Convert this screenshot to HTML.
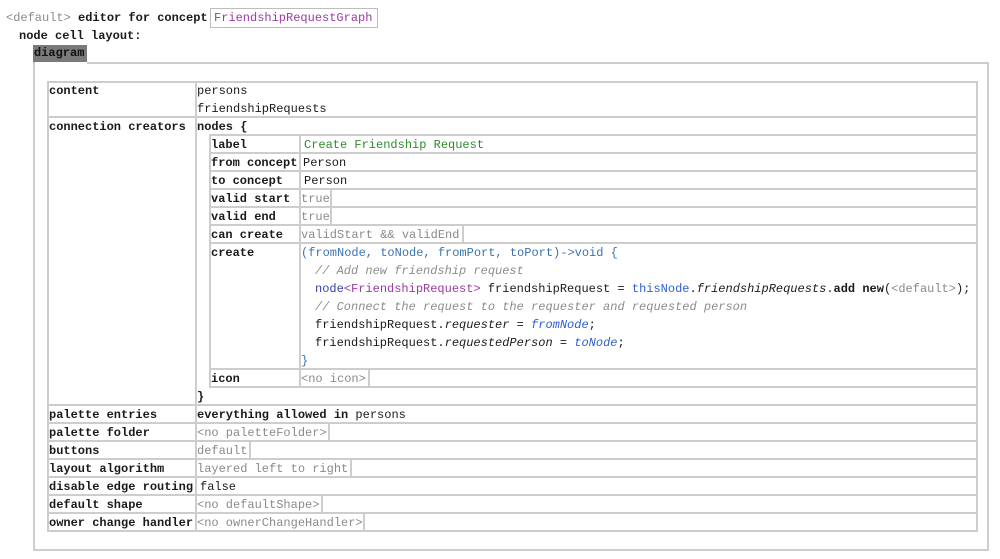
<!DOCTYPE html>
<html><head><meta charset="utf-8">
<style>
*{margin:0;padding:0;box-sizing:border-box}
body{width:1000px;height:559px;background:#fff;position:relative;overflow:hidden;font-family:"Liberation Mono",monospace;font-size:12px;color:#1a1a1a}
.t{position:absolute;line-height:18px;white-space:pre}
.b{font-weight:bold}
.g{color:#8a8a8a}
.h{position:absolute;height:2px;background:#cdcdcd}
.v{position:absolute;width:2px;background:#cdcdcd}
.bx{position:absolute;border:2px solid #cdcdcd;border-left:none;border-top:none}
.c{color:#8c8c8c;font-style:italic}
.bl{color:#3a74b0}
.pu{color:#9b3aa3}
.nd{color:#3b3fb0}
.tn{color:#2d5fd0}
.i{font-style:italic}
</style></head><body>
<div class="t" style="left:6px;top:9px"><span class="g">&lt;default&gt;</span> <span class="b">editor for concept</span></div>
<div style="position:absolute;left:210px;top:8px;width:168px;height:20px;border:1px solid #bdbdbd"></div>
<div class="t pu" style="left:214px;top:9px">FriendshipRequestGraph</div>
<div class="t b" style="left:19px;top:27px">node cell layout:</div>
<div style="position:absolute;left:33px;top:45px;width:54px;height:17px;background:#7a7a7a"></div>
<div class="t b" style="left:34px;top:44px;color:#111">diagram</div>
<div style="position:absolute;left:33px;top:62px;width:956px;height:489px;border:2px solid #cdcdcd;border-top:none"></div>
<div class="h" style="left:87px;top:62px;width:902px"></div>

<div class="v" style="left:47px;top:81px;height:451px"></div>
<div class="v" style="left:195px;top:81px;height:451px"></div>
<div class="v" style="left:976px;top:81px;height:451px"></div>
<div class="h" style="left:47px;top:81px;width:931px"></div>
<div class="h" style="left:47px;top:116px;width:931px"></div>
<div class="h" style="left:47px;top:404px;width:931px"></div>
<div class="h" style="left:47px;top:422px;width:931px"></div>
<div class="h" style="left:47px;top:440px;width:931px"></div>
<div class="h" style="left:47px;top:458px;width:931px"></div>
<div class="h" style="left:47px;top:476px;width:931px"></div>
<div class="h" style="left:47px;top:494px;width:931px"></div>
<div class="h" style="left:47px;top:512px;width:931px"></div>
<div class="h" style="left:47px;top:530px;width:931px"></div>

<div class="t b" style="left:49px;top:82px">content</div>
<div class="t" style="left:197px;top:82px">persons</div>
<div class="t" style="left:197px;top:100px">friendshipRequests</div>
<div class="t b" style="left:49px;top:118px">connection creators</div>
<div class="t b" style="left:197px;top:118px">nodes {</div>
<div class="t b" style="left:197px;top:388px">}</div>

<div class="v" style="left:209px;top:135px;height:253px"></div>
<div class="v" style="left:299px;top:135px;height:253px"></div>
<div class="h" style="left:209px;top:134px;width:768px"></div>
<div class="h" style="left:209px;top:152px;width:768px"></div>
<div class="h" style="left:209px;top:170px;width:768px"></div>
<div class="h" style="left:209px;top:188px;width:768px"></div>
<div class="h" style="left:209px;top:206px;width:768px"></div>
<div class="h" style="left:209px;top:224px;width:768px"></div>
<div class="h" style="left:209px;top:242px;width:768px"></div>
<div class="h" style="left:209px;top:368px;width:768px"></div>
<div class="h" style="left:209px;top:386px;width:768px"></div>

<div class="t b" style="left:211px;top:136px">label</div>
<div class="t" style="left:304px;top:136px;color:#2e8b2e">Create Friendship Request</div>
<div class="t b" style="left:211px;top:154px">from concept</div>
<div class="t" style="left:303px;top:154px">Person</div>
<div class="t b" style="left:211px;top:172px">to concept</div>
<div class="t" style="left:304px;top:172px">Person</div>
<div class="t b" style="left:211px;top:190px">valid start</div>
<div class="bx" style="left:299px;top:188px;width:33px;height:20px"></div>
<div class="t g" style="left:301px;top:190px">true</div>
<div class="t b" style="left:211px;top:208px">valid end</div>
<div class="bx" style="left:299px;top:206px;width:33px;height:20px"></div>
<div class="t g" style="left:301px;top:208px">true</div>
<div class="t b" style="left:211px;top:226px">can create</div>
<div class="bx" style="left:299px;top:224px;width:165px;height:20px"></div>
<div class="t g" style="left:301px;top:226px">validStart &amp;&amp; validEnd</div>
<div class="t b" style="left:211px;top:244px">create</div>
<div class="t bl" style="left:301px;top:244px">(fromNode, toNode, fromPort, toPort)-&gt;void {</div>
<div class="t c" style="left:315px;top:262px">// Add new friendship request</div>
<div class="t" style="left:315px;top:280px"><span class="nd">node</span><span class="pu">&lt;FriendshipRequest&gt;</span> friendshipRequest = <span class="tn">thisNode</span>.<span class="i">friendshipRequests</span>.<b>add</b> <b>new</b>(<span class="g">&lt;default&gt;</span>);</div>
<div class="t c" style="left:315px;top:298px">// Connect the request to the requester and requested person</div>
<div class="t" style="left:315px;top:316px">friendshipRequest.<span class="i">requester</span> = <span class="tn i">fromNode</span>;</div>
<div class="t" style="left:315px;top:334px">friendshipRequest.<span class="i">requestedPerson</span> = <span class="tn i">toNode</span>;</div>
<div class="t bl" style="left:301px;top:352px">}</div>
<div class="t b" style="left:211px;top:370px">icon</div>
<div class="bx" style="left:299px;top:368px;width:71px;height:20px"></div>
<div class="t g" style="left:301px;top:370px">&lt;no icon&gt;</div>

<div class="t b" style="left:49px;top:406px">palette entries</div>
<div class="t" style="left:197px;top:406px"><b>everything allowed in</b> persons</div>
<div class="t b" style="left:49px;top:424px">palette folder</div>
<div class="bx" style="left:195px;top:422px;width:135px;height:20px"></div>
<div class="t g" style="left:197px;top:424px">&lt;no paletteFolder&gt;</div>
<div class="t b" style="left:49px;top:442px">buttons</div>
<div class="bx" style="left:195px;top:440px;width:56px;height:20px"></div>
<div class="t g" style="left:197px;top:442px">default</div>
<div class="t b" style="left:49px;top:460px">layout algorithm</div>
<div class="bx" style="left:195px;top:458px;width:157px;height:20px"></div>
<div class="t g" style="left:197px;top:460px">layered left to right</div>
<div class="t b" style="left:49px;top:478px">disable edge routing</div>
<div class="t" style="left:200px;top:478px">false</div>
<div class="t b" style="left:49px;top:496px">default shape</div>
<div class="bx" style="left:195px;top:494px;width:128px;height:20px"></div>
<div class="t g" style="left:197px;top:496px">&lt;no defaultShape&gt;</div>
<div class="t b" style="left:49px;top:514px">owner change handler</div>
<div class="bx" style="left:195px;top:512px;width:170px;height:20px"></div>
<div class="t g" style="left:197px;top:514px">&lt;no ownerChangeHandler&gt;</div>
</body></html>
